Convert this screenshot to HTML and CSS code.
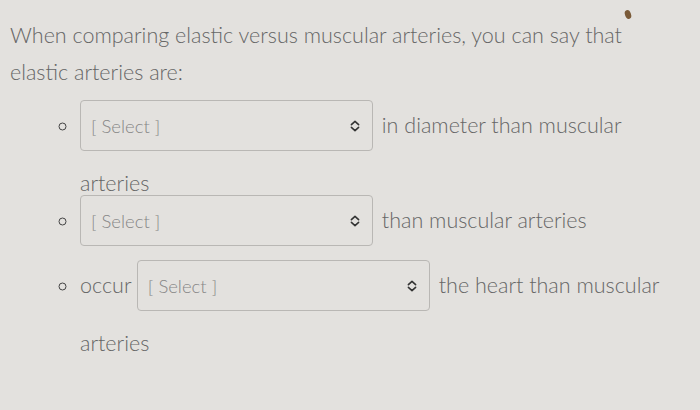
FILE: index.html
```html
<!DOCTYPE html>
<html>
<head>
<meta charset="utf-8">
<link rel="stylesheet" href="styles.css">
</head>
<body>
<div class="page">
  <span class="speck"></span>
  <p class="question">When comparing elastic versus muscular arteries, you can say that elastic arteries are:</p>
  <ul class="answers">
    <li><span class="select"><span class="ph">[ Select ]</span><svg class="chev" viewBox="0 0 10 12" width="10" height="12"><path d="M1.4 4.6 L5 1.4 L8.6 4.6 M1.4 7.4 L5 10.6 L8.6 7.4" fill="none" stroke="#333" stroke-width="1.6" stroke-linecap="round" stroke-linejoin="round"/></svg></span> in diameter than muscular arteries</li>
    <li><span class="select"><span class="ph">[ Select ]</span><svg class="chev" viewBox="0 0 10 12" width="10" height="12"><path d="M1.4 4.6 L5 1.4 L8.6 4.6 M1.4 7.4 L5 10.6 L8.6 7.4" fill="none" stroke="#333" stroke-width="1.6" stroke-linecap="round" stroke-linejoin="round"/></svg></span> than muscular arteries</li>
    <li>occur <span class="select"><span class="ph">[ Select ]</span><svg class="chev" viewBox="0 0 10 12" width="10" height="12"><path d="M1.4 4.6 L5 1.4 L8.6 4.6 M1.4 7.4 L5 10.6 L8.6 7.4" fill="none" stroke="#333" stroke-width="1.6" stroke-linecap="round" stroke-linejoin="round"/></svg></span> the heart than muscular arteries</li>
  </ul>
</div>
</body>
</html>
```
FILE: styles.css
```css
html, body {
  margin: 0;
  padding: 0;
  background: #e3e1de;
}
.page {
  position: relative;
  width: 680px;
  height: 410px;
  padding: 0 10px;
  font-family: Lato, "Open Sans", sans-serif;
  font-weight: 300;
  color: #666666;
  overflow: hidden;
}
.speck {
  position: absolute;
  left: 625px;
  top: 10px;
  width: 6px;
  height: 9px;
  border-radius: 50%;
  background: #7a5a38;
  transform: rotate(-20deg);
}
.question {
  margin: 0;
  padding-top: 17px;
  font-size: 21.5px;
  line-height: 37px;
  width: 640px;
}
.answers {
  margin: 9px 0 0;
  padding: 0 0 0 70px;
  width: 600px;
  list-style: circle;
  font-size: 21.5px;
  line-height: 30px;
}
.answers li {
  margin: 0 0 -3px;
}
.answers li::marker {
  color: #444;
  font-size: 22px;
}
.select {
  display: inline-flex;
  align-items: center;
  justify-content: space-between;
  box-sizing: border-box;
  width: 293px;
  height: 51px;
  margin: 0 3px 17px 0;
  padding: 0 12px 0 10px;
  border: 1px solid #b9b7b4;
  border-radius: 4px;
  vertical-align: baseline;
  font-size: 18.5px;
  color: #868686;
}
.chev {
  flex: none;
}
```
